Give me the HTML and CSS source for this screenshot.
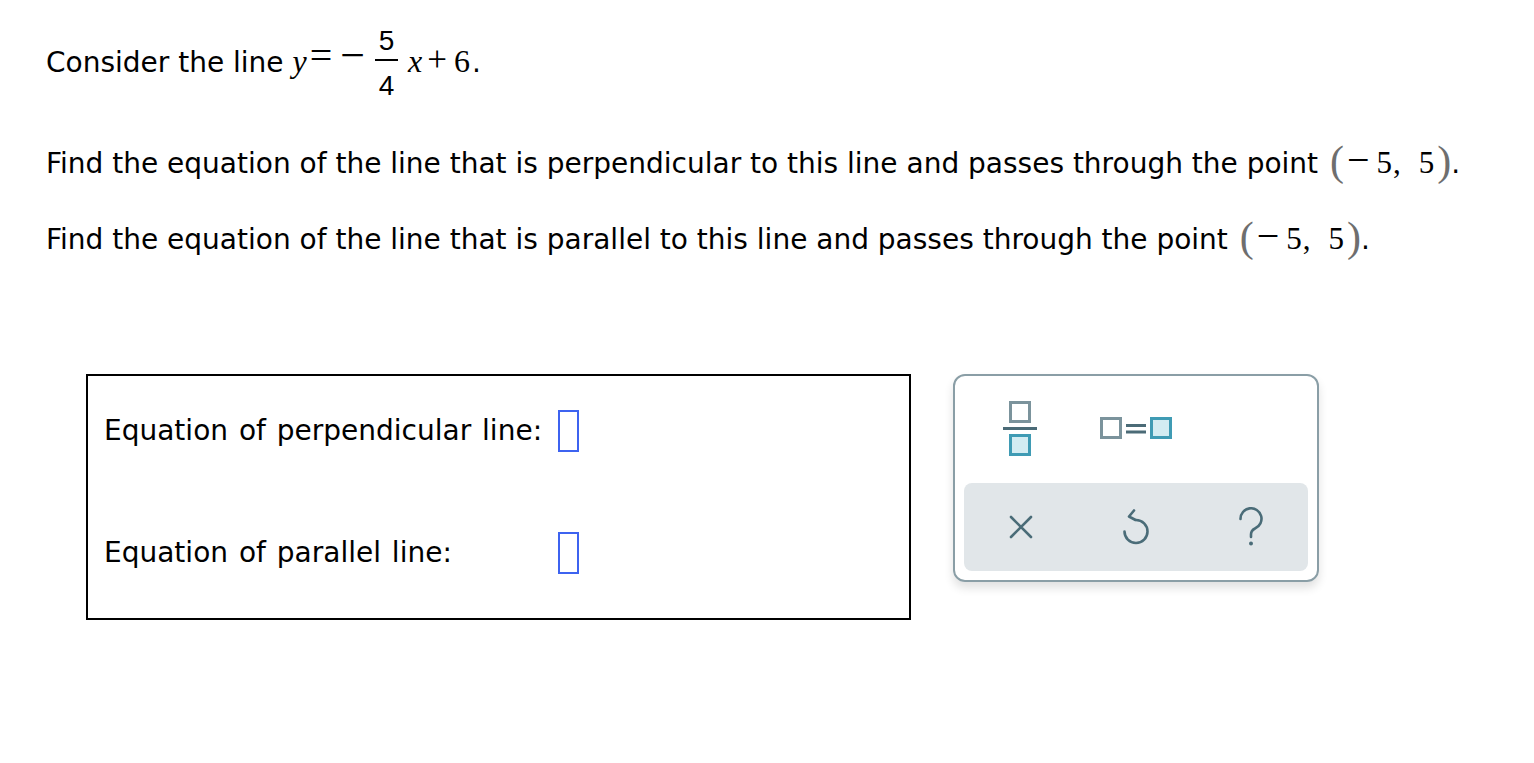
FILE: index.html
```html
<!DOCTYPE html>
<html>
<head>
<meta charset="utf-8">
<link rel="stylesheet" href="styles.css">
</head>
<body>
<div class="page">
  <p class="q q1">Consider the line <span class="m"><i class="v">y</i><span class="op eq">=</span><span class="op neg">−</span><span class="frac"><span class="num">5</span><span class="bar"></span><span class="den">4</span></span><i class="v vx">x</i><span class="op plus">+</span><span class="d">6</span></span>.</p>
  <p class="q q2">Find the equation of the line that is perpendicular to this line and passes through the point <span class="pt"><span class="paren pl">(</span><span class="op pneg">−</span><span class="dg">5</span>,<span class="sp"></span><span class="dg">5</span><span class="paren pr">)</span></span>.</p>
  <p class="q q3">Find the equation of the line that is parallel to this line and passes through the point <span class="pt"><span class="paren pl">(</span><span class="op pneg">−</span><span class="dg">5</span>,<span class="sp"></span><span class="dg">5</span><span class="paren pr">)</span></span>.</p>

  <div class="work">
    <div class="answers">
      <div class="row">
        <span class="label">Equation of perpendicular line:</span>
        <span class="input"></span>
      </div>
      <div class="row">
        <span class="label">Equation of parallel line:</span>
        <span class="input"></span>
      </div>
    </div>

    <div class="palette">
      <div class="tools">
        <button class="tool" aria-label="fraction">
          <svg width="36" height="56" viewBox="0 0 36 56">
            <rect x="7.5" y="1.5" width="19" height="19" fill="#fff" stroke="#7b939c" stroke-width="3"/>
            <line x1="0" y1="27.5" x2="34" y2="27.5" stroke="#4b6b77" stroke-width="3"/>
            <rect x="7.5" y="34.5" width="19" height="19" fill="#d3ecf2" stroke="#3f9bb4" stroke-width="3"/>
          </svg>
        </button>
        <button class="tool" aria-label="equation">
          <svg width="72" height="24" viewBox="0 0 72 24">
            <rect x="1.5" y="1.5" width="19" height="19" fill="#fff" stroke="#7b939c" stroke-width="3"/>
            <line x1="26" y1="8.5" x2="46" y2="8.5" stroke="#4b6b77" stroke-width="3"/>
            <line x1="26" y1="15" x2="46" y2="15" stroke="#4b6b77" stroke-width="3"/>
            <rect x="51.5" y="1.5" width="19" height="19" fill="#d3ecf2" stroke="#3f9bb4" stroke-width="3"/>
          </svg>
        </button>
        <span></span>
      </div>
      <div class="actions">
        <button class="tool" aria-label="clear">
          <svg width="24" height="24" viewBox="0 0 24 24">
            <path d="M2 2 L22 22 M22 2 L2 22" stroke="#4a6c78" stroke-width="2.6" stroke-linecap="round" fill="none"/>
          </svg>
        </button>
        <button class="tool" aria-label="undo">
          <svg width="30" height="36" viewBox="0 0 30 36">
            <path d="M15 11 A11.5 11.5 0 1 1 3.5 22.5" stroke="#4a6c78" stroke-width="2.6" stroke-linecap="round" fill="none"/>
            <path d="M13 1.5 L8 7.5 L14.5 11" stroke="#4a6c78" stroke-width="2.6" stroke-linecap="round" stroke-linejoin="round" fill="none"/>
          </svg>
        </button>
        <button class="tool" aria-label="help">
          <svg width="28" height="40" viewBox="0 0 28 40">
            <path d="M3.5 12 A10.5 10.5 0 1 1 18 21.5 Q14 23.5 14 27.5 V30" stroke="#4a6c78" stroke-width="2.6" stroke-linecap="round" fill="none"/>
            <circle cx="14" cy="36.5" r="2" fill="#4a6c78"/>
          </svg>
        </button>
      </div>
    </div>
  </div>
</div>
</body>
</html>
```

FILE: styles.css
```css
html, body {
  margin: 0;
  padding: 0;
  background: #fff;
}
.page {
  padding: 0 0 0 46px;
  font-family: "DejaVu Sans", Verdana, sans-serif;
  font-size: 28px;
  color: #000;
}
.q {
  margin: 0;
  line-height: 34px;
}
.q1 {
  padding-top: 26px;
}
.q2 {
  margin-top: 46px;
}
.q3 {
  margin-top: 42px;
}
.m {
  font-family: "Liberation Serif", "Times New Roman", serif;
  font-size: 32px;
  line-height: 0;
  margin-left: 0;
}
.v {
  font-style: italic;
}
.op {
  display: inline-block;
  line-height: 0;
}
.eq {
  font-size: 40px;
  margin: 0 4px 0 3px;
  vertical-align: 3px;
}
.neg {
  font-size: 44px;
  margin: 0 10px 0 4px;
  vertical-align: 2px;
}
.plus {
  font-size: 35px;
  margin: 0 7px 0 5px;
  vertical-align: 1px;
}
.vx {
  margin-left: 10px;
}
.frac {
  display: inline-flex;
  flex-direction: column;
  align-items: center;
  vertical-align: 22px;
  font-family: "Liberation Sans", Arial, sans-serif;
  font-size: 28px;
  line-height: 30px;
}
.frac .bar {
  width: 23px;
  height: 1.5px;
  background: #000;
  margin: 3px 0 10px;
}
.d {
  margin-right: 2px;
}
.pt {
  font-family: "Liberation Serif", "Times New Roman", serif;
  font-size: 31px;
  line-height: 0;
  margin-left: 3px;
}
.dg {
  display: inline-block;
  padding: 0 1px;
}
.pneg {
  font-size: 40px;
  margin: 0 6px 0 3px;
  vertical-align: 0;
}
.paren {
  color: #6e6e6e;
  font-size: 42px;
  line-height: 0;
  vertical-align: -2px;
}
.pr {
  margin-left: 2px;
}
.sp {
  display: inline-block;
  width: 17px;
}
.work {
  display: flex;
  align-items: flex-start;
  gap: 42px;
  margin-top: 117px;
  margin-left: 40px;
}
.answers {
  width: 821px;
  height: 242px;
  border: 2px solid #000;
  display: flex;
  flex-direction: column;
}
.row {
  display: flex;
  align-items: center;
  height: 42px;
  padding-left: 16px;
}
.row:first-child {
  margin-top: 34px;
}
.row + .row {
  margin-top: 80px;
}
.label {
  width: 454px;
  flex: none;
  word-spacing: 2px;
}
.input {
  display: block;
  width: 17px;
  height: 38px;
  border: 2px solid #3d63f0;
}
.palette {
  width: 344px;
  height: 195px;
  border: 2px solid #8a9ea6;
  border-radius: 12px;
  box-shadow: 0 6px 10px rgba(0, 0, 0, 0.12);
  padding: 0 9px 9px;
  display: flex;
  flex-direction: column;
}
.tools {
  height: 107px;
  display: grid;
  grid-template-columns: repeat(3, 1fr);
  align-items: center;
  justify-items: center;
}
.actions {
  height: 88px;
  background: #e1e6e9;
  border-radius: 8px;
  display: grid;
  grid-template-columns: repeat(3, 1fr);
  align-items: center;
  justify-items: center;
}
.tool {
  background: none;
  border: 0;
  padding: 0;
  margin: 0;
  display: flex;
  align-items: center;
  justify-content: center;
}
.tool svg {
  display: block;
}
```
